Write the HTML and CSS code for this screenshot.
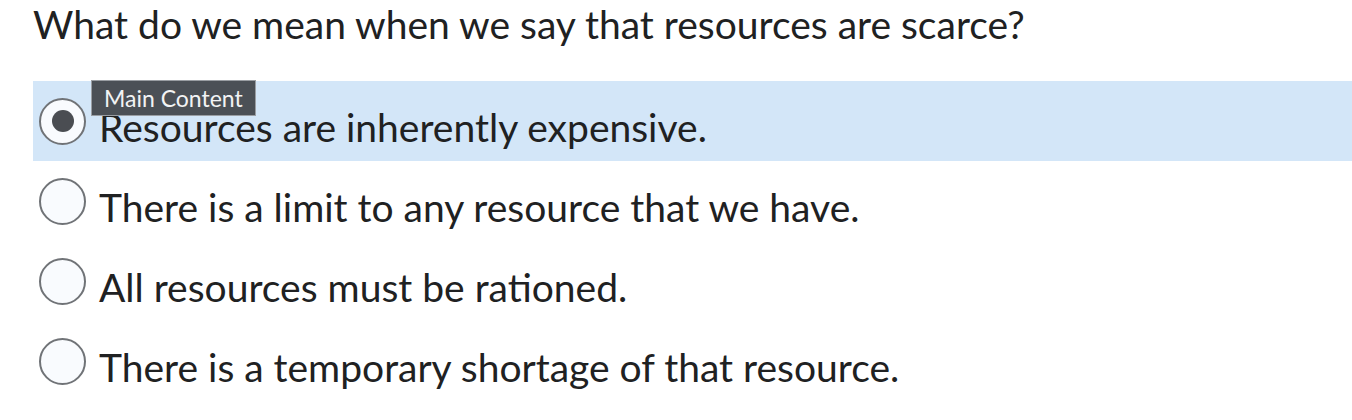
FILE: index.html
```html
<!DOCTYPE html>
<html>
<head>
<meta charset="utf-8">
<link rel="stylesheet" href="styles.css">
</head>
<body>
<div class="page">
  <h1 class="question">What do we mean when we say that resources are scarce?</h1>
  <div class="options">
    <label class="option selected">
      <span class="radio checked"></span>
      <span class="text">Resources are inherently expensive.</span>
      <span class="tooltip">Main Content</span>
    </label>
    <label class="option">
      <span class="radio"></span>
      <span class="text">There is a limit to any resource that we have.</span>
    </label>
    <label class="option">
      <span class="radio"></span>
      <span class="text">All resources must be rationed.</span>
    </label>
    <label class="option">
      <span class="radio"></span>
      <span class="text">There is a temporary shortage of that resource.</span>
    </label>
  </div>
</div>
</body>
</html>
```
FILE: styles.css
```css
html, body {
  margin: 0;
  padding: 0;
  background: #ffffff;
}
body {
  font-family: Lato, "Noto Sans", sans-serif;
  color: #202122;
  overflow: hidden;
}
.page {
  padding-left: 33px;
}
.question {
  margin: 0;
  height: 81px;
  padding-top: 1px;
  box-sizing: border-box;
  font-size: 39px;
  font-weight: 400;
  line-height: 46px;
}
.options {
  display: flex;
  flex-direction: column;
}
.option {
  position: relative;
  display: flex;
  align-items: center;
  height: 80px;
  gap: 13px;
  padding-left: 6px;
}
.option.selected {
  background: #d3e6f8;
}
.radio {
  width: 43px;
  height: 43px;
  border: 2px solid #707377;
  border-radius: 50%;
  background: #f9fbfe;
  display: flex;
  align-items: center;
  justify-content: center;
  flex: none;
}
.radio.checked::after {
  content: "";
  width: 22px;
  height: 22px;
  border-radius: 50%;
  background: #4a4d52;
}
.text {
  font-size: 39px;
  line-height: 40px;
  padding-top: 11px;
}
.tooltip {
  position: absolute;
  left: 58px;
  top: -1px;
  height: 36px;
  box-sizing: border-box;
  padding: 0 12px;
  background: #4b5056;
  border: 1px solid #9a9ea3;
  color: #f2f3f4;
  font-size: 23px;
  line-height: 34px;
}
```
